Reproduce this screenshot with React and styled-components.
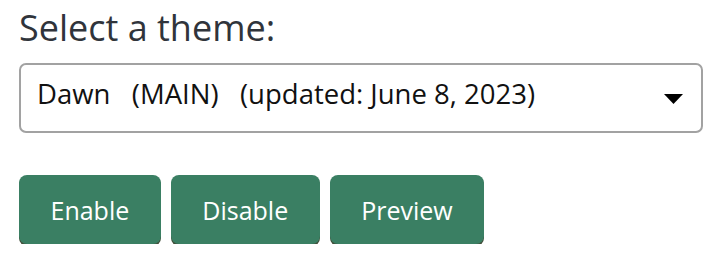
import React from "react";
import styled, { createGlobalStyle } from "styled-components";

const GlobalStyle = createGlobalStyle`
  html, body {
    margin: 0;
    padding: 0;
    background: #ffffff;
  }
  body {
    font-family: "Open Sans", "Liberation Sans", sans-serif;
  }
`;

const themes = [
  { name: "Dawn", role: "MAIN", updated: "June 8, 2023" },
];

const Panel = styled.section`
  display: flex;
  flex-direction: column;
  padding: 6px 21px 0 19px;
  width: 684px;
`;

const Title = styled.label`
  font-size: 36px;
  line-height: 44px;
  color: #30343b;
  margin-bottom: 13px;
`;

const SelectWrap = styled.div`
  position: relative;
  width: 100%;
`;

const ThemeSelect = styled.select`
  appearance: none;
  -webkit-appearance: none;
  width: 100%;
  height: 70px;
  box-sizing: border-box;
  padding: 0 60px 10px 16px;
  border: 2px solid #a2a2a2;
  border-radius: 7px;
  background: #ffffff;
  font-family: "Open Sans", "Liberation Sans", sans-serif;
  font-size: 27.5px;
  color: #111111;
  outline: none;
`;

const Arrow = styled.svg`
  position: absolute;
  right: 20px;
  top: 31px;
  width: 19px;
  height: 10px;
  pointer-events: none;
`;

const ButtonRow = styled.div`
  display: flex;
  gap: 10px;
  margin-top: 42px;
`;

const ActionButton = styled.button`
  height: 69px;
  padding: 0 31.5px;
  border: none;
  border-radius: 8px;
  background: #3a7f63;
  box-shadow: 0 2px 0 #414f3a;
  color: #ffffff;
  font-family: "Open Sans", "Liberation Sans", sans-serif;
  font-size: 25px;
  cursor: pointer;
`;

const gap = (n) => "\u00a0".repeat(n);

export default function App() {
  return (
    <>
      <GlobalStyle />
      <Panel>
        <Title htmlFor="theme">Select a theme:</Title>
        <SelectWrap>
          <ThemeSelect id="theme" defaultValue="Dawn">
            {themes.map((t) => (
              <option key={t.name} value={t.name}>
                {`${t.name}${gap(3)}(${t.role})${gap(3)}(updated: ${t.updated})`}
              </option>
            ))}
          </ThemeSelect>
          <Arrow viewBox="0 0 19 10">
            <path d="M0 0 L19 0 L9.5 10 Z" fill="#000" />
          </Arrow>
        </SelectWrap>
        <ButtonRow>
          <ActionButton>Enable</ActionButton>
          <ActionButton>Disable</ActionButton>
          <ActionButton>Preview</ActionButton>
        </ButtonRow>
      </Panel>
    </>
  );
}
